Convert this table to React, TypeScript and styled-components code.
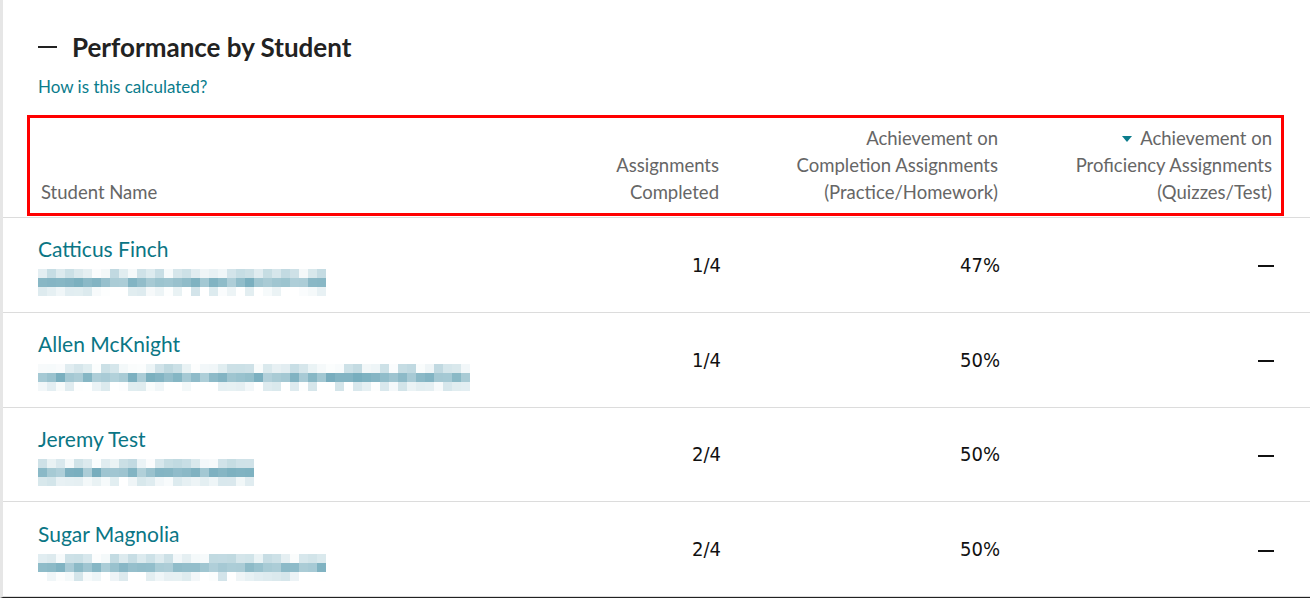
import React from "react";
import styled, { createGlobalStyle } from "styled-components";

const GlobalStyle = createGlobalStyle`
  html, body { margin: 0; padding: 0; background: #fff; }
  body { font-family: Lato, "Noto Sans", sans-serif; }
`;

const Page = styled.div`
  width: 1310px;
  height: 598px;
  box-sizing: border-box;
  border-left: 3px solid #e6e6e6;
  border-bottom: 1px solid #222;
  display: flex;
  flex-direction: column;
  overflow: hidden;
  position: relative;
`;

const Intro = styled.div`
  padding: 32px 0 0 35px;
  display: flex;
  flex-direction: column;
`;

const TitleRow = styled.div`
  display: flex;
  align-items: center;
  gap: 15px;
  height: 30px;
`;

const Collapse = styled.span`
  display: block;
  width: 19px;
  height: 2px;
  background: #222;
`;

const Title = styled.h2`
  margin: 0;
  font-size: 26px;
  font-weight: 700;
  color: #222;
  line-height: 30px;
`;

const HelpLink = styled.a`
  margin-top: 15px;
  font-size: 17px;
  line-height: 20px;
  color: #0a7c8c;
  text-decoration: none;
`;

const HeaderWrap = styled.div`
  margin-top: 18px;
  padding: 0 26px 1px 24px;
  border-bottom: 1px solid #dcdcdc;
`;

const HeaderBox = styled.div`
  height: 101px;
  box-sizing: border-box;
  border: 3px solid #ff0000;
  padding: 0 9px 7px 11px;
  display: grid;
  grid-template-columns: 1fr 250px 279px 274px;
  align-items: end;
`;

const HeadCell = styled.div<{ $right?: boolean }>`
  font-size: 18.5px;
  line-height: 27px;
  color: #666;
  text-align: ${(p) => (p.$right ? "right" : "left")};
`;

const SortArrow = styled.span`
  display: inline-block;
  width: 0;
  height: 0;
  border-left: 5px solid transparent;
  border-right: 5px solid transparent;
  border-top: 6px solid #0a7c8c;
  margin-right: 8px;
  vertical-align: 3px;
`;

const Row = styled.div`
  height: 95px;
  box-sizing: border-box;
  border-bottom: 1px solid #dcdcdc;
  padding: 0 36px 0 35px;
  display: grid;
  grid-template-columns: 1fr 250px 279px 274px;
  align-items: center;
`;

const NameCell = styled.div`
  display: flex;
  flex-direction: column;
  gap: 8px;
  padding-top: 4px;
`;

const StudentName = styled.a`
  font-size: 21px;
  line-height: 24px;
  color: #0a7685;
  text-decoration: none;
`;

const Value = styled.div`
  font-size: 20px;
  color: #111;
  text-align: right;
  font-family: "DejaVu Sans Condensed", "DejaVu Sans", sans-serif;
`;

const Dash = styled.span`
  display: inline-block;
  width: 16px;
  height: 2px;
  background: #111;
  vertical-align: middle;
`;

function rng(seed: number) {
  let s = seed;
  return () => {
    s = (s * 9301 + 49297) % 233280;
    return s / 233280;
  };
}

const mix = (t: number) => {
  const a = [255, 255, 255];
  const b = [104, 164, 182];
  const c = a.map((v, i) => Math.round(v + (b[i] - v) * t));
  return `rgb(${c[0]},${c[1]},${c[2]})`;
};

const Pixelated: React.FC<{ blocks: number; seed: number }> = ({ blocks, seed }) => {
  const r = rng(seed);
  const rects: React.ReactNode[] = [];
  const base = [0.22, 0.7, 0.1];
  for (let row = 0; row < 3; row++) {
    for (let i = 0; i < blocks; i++) {
      const t = Math.max(0, Math.min(1, base[row] + (r() - 0.5) * 0.4));
      rects.push(<rect key={`${row}-${i}`} x={i * 9} y={row * 9} width={9} height={9} fill={mix(t)} />);
    }
  }
  return (
    <svg width={blocks * 9} height={27} style={{ display: "block" }}>
      {rects}
    </svg>
  );
};

const students = [
  { name: "Catticus Finch", blocks: 32, done: "1/4", comp: "47%" },
  { name: "Allen McKnight", blocks: 48, done: "1/4", comp: "50%" },
  { name: "Jeremy Test", blocks: 24, done: "2/4", comp: "50%" },
  { name: "Sugar Magnolia", blocks: 32, done: "2/4", comp: "50%" },
];

export default function App() {
  return (
    <>
      <GlobalStyle />
      <Page>
        <Intro>
          <TitleRow>
            <Collapse />
            <Title>Performance by Student</Title>
          </TitleRow>
          <HelpLink href="#">How is this calculated?</HelpLink>
        </Intro>
        <HeaderWrap>
          <HeaderBox>
            <HeadCell>Student Name</HeadCell>
            <HeadCell $right>
              Assignments
              <br />
              Completed
            </HeadCell>
            <HeadCell $right>
              Achievement on
              <br />
              Completion Assignments
              <br />
              (Practice/Homework)
            </HeadCell>
            <HeadCell $right>
              <SortArrow />
              Achievement on
              <br />
              Proficiency Assignments
              <br />
              (Quizzes/Test)
            </HeadCell>
          </HeaderBox>
        </HeaderWrap>
        {students.map((s, i) => (
          <Row key={s.name}>
            <NameCell>
              <StudentName href="#">{s.name}</StudentName>
              <Pixelated blocks={s.blocks} seed={i * 17 + 5} />
            </NameCell>
            <Value>{s.done}</Value>
            <Value>{s.comp}</Value>
            <Value>
              <Dash />
            </Value>
          </Row>
        ))}
      </Page>
    </>
  );
}
